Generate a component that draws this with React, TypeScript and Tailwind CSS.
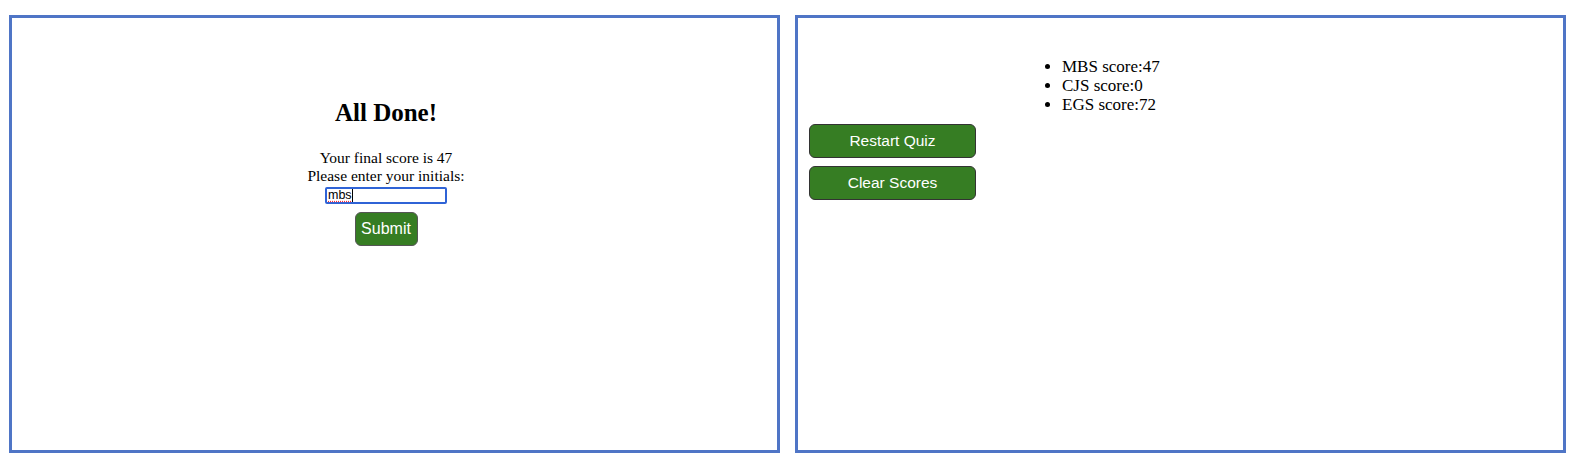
const scores = [
  { initials: "MBS", score: 47 },
  { initials: "CJS", score: 0 },
  { initials: "EGS", score: 72 },
];

const serif = "font-['Liberation_Serif','Times_New_Roman',serif]";
const sans = "font-['Liberation_Sans',Arial,sans-serif]";

function DonePanel() {
  return (
    <section className={`w-[771px] h-[438px] border-[3px] border-[#4f75c6] ${serif} text-black flex flex-col items-center pt-[80px] pr-[17px]`}>
      <h2 className="text-[25px] leading-[30px] font-bold">All Done!</h2>
      <p className="mt-[21px] text-[15.5px] leading-[18px] text-center">
        Your final score is 47
        <br />
        Please enter your initials:
      </p>
      <div className={`mt-[2px] w-[122px] h-[17px] border-2 border-[#2f63d6] rounded-[2px] flex items-center px-[1px] ${sans} text-[12.5px] leading-none`}>
        <span className="underline decoration-dotted decoration-red-500 underline-offset-2">mbs</span>
        <span className="w-px h-[13px] bg-black" />
      </div>
      <button className={`mt-[8px] w-[63px] h-[34px] rounded-[6px] bg-[#367d23] border border-[#555] text-white text-[16px] ${sans}`}>
        Submit
      </button>
    </section>
  );
}

function ScoresPanel() {
  return (
    <section className="w-[771px] h-[438px] border-[3px] border-[#4f75c6] pt-[39px] pl-[11px] flex flex-col">
      <ul className={`list-disc ml-[241px] pl-[12px] ${serif} text-[17px] leading-[19px] text-black`}>
        {scores.map((s) => (
          <li key={s.initials}>
            {s.initials} score:{s.score}
          </li>
        ))}
      </ul>
      <div className="mt-[10px] flex flex-col gap-[8px]">
        {["Restart Quiz", "Clear Scores"].map((label) => (
          <button
            key={label}
            className={`w-[167px] h-[34px] rounded-[6px] bg-[#367d23] border border-[#333] text-white text-[15.5px] ${sans}`}
          >
            {label}
          </button>
        ))}
      </div>
    </section>
  );
}

export default function App() {
  return (
    <div className="w-[1582px] h-[462px] bg-white flex gap-[15px] pt-[15px] pl-[9px]">
      <DonePanel />
      <ScoresPanel />
    </div>
  );
}
